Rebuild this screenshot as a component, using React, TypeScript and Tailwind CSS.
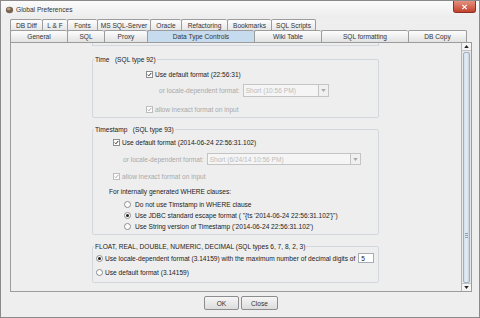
import React from 'react';

const rowOne = [
  { label: 'DB Diff', w: 'w-[32px]' },
  { label: 'L & F', w: 'w-[25px]' },
  { label: 'Fonts', w: 'w-[30px]' },
  { label: 'MS SQL-Server', w: 'w-[53px]' },
  { label: 'Oracle', w: 'w-[31px]' },
  { label: 'Refactoring', w: 'w-[46px]' },
  { label: 'Bookmarks', w: 'w-[44px]' },
  { label: 'SQL Scripts', w: 'w-[45px]' },
];

const rowTwo = [
  { label: 'General', w: 'w-[57px]' },
  { label: 'SQL', w: 'w-[37px]' },
  { label: 'Proxy', w: 'w-[43px]' },
  { label: 'Data Type Controls', w: 'w-[107px]', active: true },
  { label: 'Wiki Table', w: 'w-[67px]' },
  { label: 'SQL formatting', w: 'w-[87px]' },
  { label: 'DB Copy', w: 'w-[59px]' },
];

const Check = ({ disabled }: { disabled?: boolean }) => (
  <span
    className={`flex h-[7px] w-[7px] shrink-0 items-center justify-center border bg-white ${
      disabled ? 'border-[#bdbdbd]' : 'border-[#8c8c8c]'
    }`}
  >
    <svg viewBox="0 0 7 7" className="h-[5px] w-[5px]">
      <path
        d="M1 3.6 L2.7 5.3 L6 1.3"
        fill="none"
        stroke={disabled ? '#a3a3a3' : '#202020'}
        strokeWidth="1.3"
      />
    </svg>
  </span>
);

const Radio = ({ on }: { on?: boolean }) => (
  <span className="flex h-[7px] w-[7px] shrink-0 items-center justify-center rounded-full border border-[#8e8e8e] bg-white">
    {on && <span className="h-[3px] w-[3px] rounded-full bg-[#1e1e1e]" />}
  </span>
);

const Combo = ({ text, w, h }: { text: string; w: string; h: string }) => (
  <div className={`flex ${w} ${h}`}>
    <div className="flex flex-1 items-center border border-[#c4c4c4] bg-[#f5f5f5] pl-[2px] text-[#bcbcbc]">
      {text}
    </div>
    <div className="flex w-[10px] items-center justify-center border border-l-0 border-[#c4c4c4] bg-[#f0f0f0]">
      <svg viewBox="0 0 6 4" className="h-[3px] w-[5px]">
        <path d="M0 0 L6 0 L3 4 Z" fill="#a8a8a8" />
      </svg>
    </div>
  </div>
);

const Group = ({
  title,
  children,
  className,
}: {
  title: string;
  children: React.ReactNode;
  className?: string;
}) => (
  <div className={`rounded-[2px] border border-[#d2d8dd] ${className ?? ''}`}>
    <div className="-mt-[5px] ml-[1px] h-[9px] w-fit whitespace-pre bg-[#eeeeee] px-[1px] leading-[9px] text-[#222]">
      {title}
    </div>
    {children}
  </div>
);

export default function App() {
  return (
    <div className="flex h-[318px] w-[480px] flex-col overflow-hidden border border-[#8a8a8a] bg-[#eeeeee] font-['Liberation_Sans',Arial,sans-serif] text-[6.6px] leading-[9px] text-[#222]">
      {/* title bar */}
      <div className="flex h-[17px] shrink-0 items-center bg-gradient-to-b from-[#fbfbfb] to-[#ececec] pl-[4px] pr-[3px]">
        <svg viewBox="0 0 10 10" className="h-[9px] w-[9px]">
          <ellipse cx="5" cy="5.5" rx="4" ry="3.6" fill="#7a6650" />
          <ellipse cx="4.2" cy="4.4" rx="2" ry="1.5" fill="#b9a68c" />
        </svg>
        <span className="ml-[2px] text-[#333]">Global Preferences</span>
        <div className="ml-auto flex h-[12px] w-[23px] items-center justify-center self-start rounded-b-[3px] border border-t-0 border-[#8e3024] bg-gradient-to-b from-[#e6907f] to-[#c2402c]">
          <svg viewBox="0 0 8 6" className="h-[6px] w-[7px]">
            <path d="M1.5 0.5 L6.5 5.5 M6.5 0.5 L1.5 5.5" stroke="#fff" strokeWidth="1.4" />
          </svg>
        </div>
      </div>

      <div className="flex flex-1 flex-col pl-[9px] pr-[7px]">
        {/* tab rows */}
        <div className="mt-[1px] flex h-[12px]">
          {rowOne.map((t) => (
            <div
              key={t.label}
              className={`${t.w} flex items-center justify-center rounded-t-[2px] border-l border-t border-[#9c9c9c] bg-gradient-to-b from-[#fdfdfd] to-[#e4e4e4] text-[#333] last:border-r`}
            >
              {t.label}
            </div>
          ))}
        </div>
        <div className="relative -mt-[1px] flex h-[12px]">
          {rowTwo.map((t) => (
            <div
              key={t.label}
              className={`${t.w} flex items-center justify-center rounded-t-[2px] border-l border-t border-[#9c9c9c] text-[#333] last:border-r ${
                t.active ? 'bg-[#c6dbee]' : 'bg-gradient-to-b from-[#fdfdfd] to-[#e2e2e2]'
              }`}
            >
              {t.label}
            </div>
          ))}
        </div>

        {/* content panel */}
        <div className="flex h-[250px] border border-[#9c9c9c] bg-[#eeeeee]">
          <div className="flex-1 overflow-hidden pl-[81px]">
            <div className="flex w-[287px] flex-col">
              <div className="h-[3px] border-x border-b border-[#d2d8dd]" />

              <Group title="Time   (SQL type 92)" className="mt-[13px] pb-[3px]">
                <div className="mt-[5px] flex h-[10px] items-center gap-[2px] pl-[53px]">
                  <Check />
                  <span>Use default format (22:56:31)</span>
                </div>
                <div className="mt-[5px] flex h-[13px] items-center pl-[66px]">
                  <span className="text-[#a9a9a9]">or locale-dependent format:</span>
                  <div className="ml-[3px]">
                    <Combo text="Short (10:56 PM)" w="w-[86px]" h="h-[13px]" />
                  </div>
                </div>
                <div className="mt-[7px] flex h-[10px] items-center gap-[2px] pl-[53px]">
                  <Check disabled />
                  <span className="text-[#a9a9a9]">allow inexact format on input</span>
                </div>
              </Group>

              <Group title="Timestamp   (SQL type 93)" className="mt-[11px] pb-[2px]">
                <div className="mt-[3px] flex h-[10px] items-center gap-[2px] pl-[20px]">
                  <Check />
                  <span>Use default format (2014-06-24 22:56:31.102)</span>
                </div>
                <div className="mt-[6px] flex h-[12px] items-center pl-[30px]">
                  <span className="text-[#a9a9a9]">or locale-dependent format:</span>
                  <div className="ml-[3px]">
                    <Combo text="Short (6/24/14 10:56 PM)" w="w-[154px]" h="h-[12px]" />
                  </div>
                </div>
                <div className="mt-[6px] flex h-[10px] items-center gap-[2px] pl-[20px]">
                  <Check disabled />
                  <span className="text-[#a9a9a9]">allow inexact format on input</span>
                </div>
                <div className="mt-[5px] flex h-[10px] items-center pl-[16px]">
                  For internally generated WHERE clauses:
                </div>
                <div className="mt-[3px] flex flex-col pl-[31px]">
                  <div className="flex h-[11px] items-center gap-[4px]">
                    <Radio />
                    <span>Do not use Timstamp in WHERE clause</span>
                  </div>
                  <div className="flex h-[11px] items-center gap-[4px]">
                    <Radio on />
                    <span>Use JDBC standard escape format ( "{"{"}ts '2014-06-24 22:56:31.102'{"}"}")</span>
                  </div>
                  <div className="flex h-[11px] items-center gap-[4px]">
                    <Radio />
                    <span>Use String version of Timestamp ('2014-06-24 22:56:31.102')</span>
                  </div>
                </div>
              </Group>

              <Group
                title="FLOAT, REAL, DOUBLE, NUMERIC, DECIMAL (SQL types 6, 7, 8, 2, 3)"
                className="mt-[11px] pb-[5px]"
              >
                <div className="mt-[2px] flex h-[10px] items-center gap-[2px] pl-[3px]">
                  <Radio on />
                  <span>Use locale-dependent format (3.14159) with the maximum number of decimal digits of</span>
                  <div className="ml-[1px] flex h-[10px] w-[16px] items-center border border-[#a5acb5] bg-white pl-[2px]">
                    5
                  </div>
                </div>
                <div className="mt-[4px] flex h-[10px] items-center gap-[2px] pl-[3px]">
                  <Radio />
                  <span>Use default format (3.14159)</span>
                </div>
              </Group>
            </div>
          </div>

          {/* scrollbar */}
          <div className="flex w-[10px] flex-col border-l border-[#b4b4b4] bg-[#e8e8e8]">
            <div className="flex h-[8px] items-center justify-center border-b border-[#c2c2c2] bg-[#f4f4f4]">
              <svg viewBox="0 0 6 4" className="h-[3px] w-[5px]">
                <path d="M0 4 L6 4 L3 0 Z" fill="#222" />
              </svg>
            </div>
            <div className="mx-[1px] mt-[1px] flex flex-1 flex-col items-center justify-end rounded-[2px] border border-[#9eb0c2] bg-gradient-to-r from-[#d3dfeb] via-[#e4ecf4] to-[#c3d3e3] pb-[44px]">
              <div className="flex flex-col gap-[1px]">
                <div className="h-px w-[3px] bg-[#8aa0b6]" />
                <div className="h-px w-[3px] bg-[#8aa0b6]" />
                <div className="h-px w-[3px] bg-[#8aa0b6]" />
              </div>
            </div>
            <div className="flex h-[8px] items-center justify-center border-t border-[#c2c2c2] bg-[#f4f4f4]">
              <svg viewBox="0 0 6 4" className="h-[3px] w-[5px]">
                <path d="M0 0 L6 0 L3 4 Z" fill="#222" />
              </svg>
            </div>
          </div>
        </div>

        {/* buttons */}
        <div className="mt-[4px] flex justify-center gap-[2px]">
          <button className="flex h-[14px] w-[35px] items-center justify-center rounded-[2px] border border-[#8d8d8d] bg-gradient-to-b from-[#f6f6f6] to-[#dcdcdc] text-[#333]">
            OK
          </button>
          <button className="flex h-[14px] w-[37px] items-center justify-center rounded-[2px] border border-[#8d8d8d] bg-gradient-to-b from-[#f6f6f6] to-[#dcdcdc] text-[#333]">
            Close
          </button>
        </div>
      </div>
    </div>
  );
}
